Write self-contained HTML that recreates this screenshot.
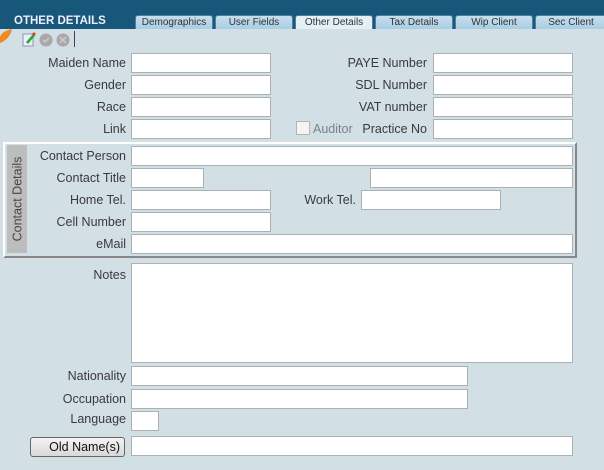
<!DOCTYPE html>
<html><head><style>
*{margin:0;padding:0;box-sizing:border-box}
body{width:604px;height:470px;background:#d2dfe5;font-family:"Liberation Sans",sans-serif;font-size:12.5px;color:#3a3a3a;position:relative;overflow:hidden}
.a{position:absolute}
.hd{left:0;top:0;width:604px;height:29px;background:#17577a}
.ttl{left:14px;top:15px;color:#eef;font-weight:bold;font-size:11.5px}
.tab{top:15px;height:14px;background:linear-gradient(#c6dfee,#a9cde3);border:1px solid #4d7f9c;border-bottom:none;border-radius:3px 3px 0 0;font-size:10px;color:#333;text-align:center;line-height:13px}
.tab.on{background:#e4f0f6}
.in{background:#fff;border:1px solid #a9b1b5;height:20px}
.l{text-align:right;white-space:nowrap;line-height:20px}
</style></head><body>
<div class="a hd"></div>
<div class="a ttl">OTHER DETAILS</div>
<div class="a tab" style="left:135px;width:78px">Demographics</div>
<div class="a tab" style="left:215px;width:78px">User Fields</div>
<div class="a tab on" style="left:295px;width:78px">Other Details</div>
<div class="a tab" style="left:375px;width:78px">Tax Details</div>
<div class="a tab" style="left:455px;width:78px">Wip Client</div>
<div class="a tab" style="left:535px;width:72px">Sec Client</div>
<svg class="a" style="left:0;top:29px" width="13" height="14"><path d="M0 14 L0 8 Q2 2 12 0 L12 0 Q10 10 0 14Z" fill="#f08a1c"/></svg>
<svg class="a" style="left:20px;top:31px" width="56" height="17">
<rect x="3" y="3" width="10" height="12" fill="#eef" stroke="#8899aa"/>
<path d="M7 12 L14 4" stroke="#2a2" stroke-width="2.5"/><circle cx="14" cy="3" r="1.5" fill="#d33"/>
<circle cx="26" cy="9" r="6.5" fill="#a8a8a8"/><path d="M23 9 l2 2 l4-4" stroke="#ccc" fill="none" stroke-width="1.5"/>
<circle cx="43" cy="9" r="6.5" fill="#a8a8a8"/><path d="M40 6 l6 6 M46 6 l-6 6" stroke="#ccc" stroke-width="1.5"/>
<line x1="54.5" y1="0" x2="54.5" y2="16" stroke="#444"/>
</svg>

<div class="a l" style="right:478px;top:53px">Maiden Name</div><div class="a in" style="left:131px;top:53px;width:140px"></div>
<div class="a l" style="right:478px;top:75px">Gender</div><div class="a in" style="left:131px;top:75px;width:140px"></div>
<div class="a l" style="right:478px;top:97px">Race</div><div class="a in" style="left:131px;top:97px;width:140px"></div>
<div class="a l" style="right:478px;top:119px">Link</div><div class="a in" style="left:131px;top:119px;width:140px"></div>

<div class="a l" style="right:177px;top:53px">PAYE Number</div><div class="a in" style="left:433px;top:53px;width:140px"></div>
<div class="a l" style="right:177px;top:75px">SDL Number</div><div class="a in" style="left:433px;top:75px;width:140px"></div>
<div class="a l" style="right:177px;top:97px">VAT number</div><div class="a in" style="left:433px;top:97px;width:140px"></div>
<div class="a" style="left:296px;top:121px;width:14px;height:14px;background:#f4f4f4;border:1px solid #b5b5b5"></div>
<div class="a l" style="left:313px;top:119px;color:#7a8288">Auditor</div>
<div class="a l" style="right:177px;top:119px">Practice No</div><div class="a in" style="left:433px;top:119px;width:140px"></div>

<div class="a" style="left:3px;top:142px;width:574px;height:116px;border-top:2px solid #fff;border-left:2px solid #fff;border-right:2px solid #888;border-bottom:2px solid #888"></div>
<div class="a" style="left:7px;top:145px;width:20px;height:108px;background:#bdbdbd"></div>
<div class="a" style="left:7px;top:145px;width:20px;height:108px;display:flex;align-items:center;justify-content:center"><div style="transform:rotate(-90deg);white-space:nowrap;color:#444">Contact Details</div></div>
<div class="a l" style="right:478px;top:146px">Contact Person</div><div class="a in" style="left:131px;top:146px;width:442px"></div>
<div class="a l" style="right:478px;top:168px">Contact Title</div><div class="a in" style="left:131px;top:168px;width:73px"></div>
<div class="a in" style="left:370px;top:168px;width:203px"></div>
<div class="a l" style="right:478px;top:190px">Home Tel.</div><div class="a in" style="left:131px;top:190px;width:140px"></div>
<div class="a l" style="right:248px;top:190px">Work Tel.</div><div class="a in" style="left:361px;top:190px;width:140px"></div>
<div class="a l" style="right:478px;top:212px">Cell Number</div><div class="a in" style="left:131px;top:212px;width:140px"></div>
<div class="a l" style="right:478px;top:234px">eMail</div><div class="a in" style="left:131px;top:234px;width:442px"></div>

<div class="a l" style="right:478px;top:265px">Notes</div><div class="a in" style="left:131px;top:263px;width:442px;height:100px"></div>
<div class="a l" style="right:478px;top:366px">Nationality</div><div class="a in" style="left:131px;top:366px;width:337px"></div>
<div class="a l" style="right:478px;top:389px">Occupation</div><div class="a in" style="left:131px;top:389px;width:337px"></div>
<div class="a l" style="right:478px;top:409px">Language</div><div class="a in" style="left:131px;top:411px;width:28px"></div>
<div class="a" style="left:30px;top:437px;width:95px;height:20px;background:linear-gradient(#f4f4f4,#d8d8d8);border:1px solid #666;border-radius:3px;text-align:right;padding-right:4px;line-height:18px;color:#111">Old Name(s)</div>
<div class="a in" style="left:131px;top:436px;width:442px"></div>
</body></html>
